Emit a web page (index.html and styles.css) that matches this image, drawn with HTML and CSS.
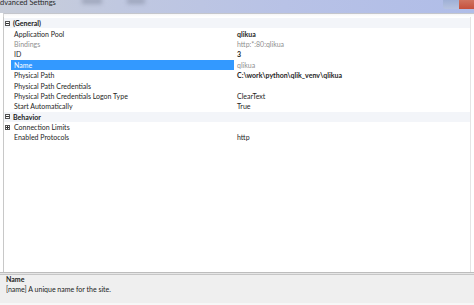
FILE: index.html
```html
<!DOCTYPE html>
<html lang="en">
<head>
    <meta charset="UTF-8">
    <title>Advanced Settings</title>
    <link rel="stylesheet" href="styles.css">
</head>
<body>
    <div class="window">
        <!-- 标题栏 -->
        <div class="titlebar">
            <span class="title">Advanced Settings</span>
            <span class="blur b1"></span>
            <span class="blur b2"></span>
            <span class="spacer"></span>
            <span class="btn_max"></span>
            <span class="btn_close"></span>
        </div>
        <div class="top_line"></div>
        <!-- 属性表 -->
        <div class="grid">
            <div class="row category"><span class="toggle minus"></span><span class="cat">(General)</span></div>
            <div class="row"><span class="name">Application Pool</span><span class="value bold">qlikua</span></div>
            <div class="row readonly"><span class="name">Bindings</span><span class="value">http:*:80:qlikua</span></div>
            <div class="row"><span class="name">ID</span><span class="value bold">3</span></div>
            <div class="row selected"><span class="name">Name</span><span class="value">qlikua</span></div>
            <div class="row"><span class="name">Physical Path</span><span class="value bold">C:\work\python\qlik_venv\qlikua</span></div>
            <div class="row"><span class="name">Physical Path Credentials</span><span class="value"></span></div>
            <div class="row"><span class="name">Physical Path Credentials Logon Type</span><span class="value">ClearText</span></div>
            <div class="row"><span class="name">Start Automatically</span><span class="value">True</span></div>
            <div class="row category"><span class="toggle minus"></span><span class="cat">Behavior</span></div>
            <div class="row"><span class="toggle plus"></span><span class="name sub">Connection Limits</span><span class="value"></span></div>
            <div class="row"><span class="name">Enabled Protocols</span><span class="value">http</span></div>
        </div>
        <!-- 说明区 -->
        <div class="desc">
            <div class="desc_title">Name</div>
            <div class="desc_text">[name] A unique name for the site.</div>
        </div>
    </div>
</body>
</html>
```

FILE: styles.css
```css
*{
    box-sizing: border-box;
}
body{
    margin: 0;
    width: 474px;
    height: 305px;
    overflow: hidden;
    background: #fff;
    font-family: Lato, "Open Sans", "Liberation Sans", sans-serif;
    font-size: 7px;
    color: #1e1e1e;
}
.window{
    display: flex;
    flex-direction: column;
    height: 305px;
}
.titlebar{
    display: flex;
    align-items: flex-start;
    height: 13px;
    background: linear-gradient(to right, #c9ced9 0%, #c0c8e0 25%, #b8c2e6 60%, #b0bde8 100%);
    overflow: hidden;
}
.title{
    margin-left: -5px;
    margin-top: -2px;
    line-height: 9px;
    font-size: 7.5px;
    color: #2b2b2b;
    white-space: nowrap;
}
.blur{
    margin-top: -2px;
    height: 6px;
    background: #7e869b;
    filter: blur(2px);
    opacity: 0.5;
}
.b1{
    width: 20px;
    margin-left: 26px;
}
.b2{
    width: 18px;
    margin-left: 25px;
}
.spacer{
    flex: 1;
}
.btn_max{
    width: 16px;
    height: 9px;
    background: linear-gradient(#9fb0d6, #b7c3e0);
    border-radius: 0 0 0 3px;
}
.btn_close{
    width: 15px;
    height: 9px;
    background: linear-gradient(#d0735f, #c5503c);
}
.top_line{
    height: 4px;
    border-top: 1px solid #c4c6cc;
    background: linear-gradient(#f6f6f7, #ffffff);
    border-left: 1px solid #d5d5d5;
    margin-left: 3px;
}
.grid{
    flex: 1;
    padding-top: 1px;
    margin-left: 3px;
    margin-right: 3px;
    border-left: 1px solid #c8c8c8;
    border-right: 1px solid #e4e4e4;
}
.row{
    display: flex;
    align-items: center;
    height: 10.4px;
    line-height: 10px;
    white-space: nowrap;
}
.row .name{
    width: 223px;
    margin-left: 7px;
    padding-left: 3px;
    height: 10px;
}
.row .value{
    padding-left: 3px;
}
.category{
    background: #f3f5f9;
}
.cat{
    padding-left: 3px;
    font-weight: bold;
    color: #1a1a1a;
}
.bold{
    font-weight: bold;
}
.readonly .name,
.readonly .value{
    color: #8f8f8f;
}
.selected .name{
    background: #3399ff;
    color: #fff;
}
.selected .value{
    color: #8f8f8f;
}
.toggle{
    position: relative;
    width: 5px;
    height: 5px;
    margin-left: 1px;
    border: 1px solid #555;
    background: #fff;
    flex: none;
}
.toggle::before{
    content: "";
    position: absolute;
    left: 0;
    top: 1px;
    width: 3px;
    height: 1px;
    background: #333;
}
.plus::after{
    content: "";
    position: absolute;
    left: 1px;
    top: 0;
    width: 1px;
    height: 3px;
    background: #333;
}
.row .sub{
    margin-left: 1px;
    padding-left: 3px;
    width: 223px;
}
.desc{
    height: 33px;
    border-top: 1px solid #bdbdbd;
    box-shadow: inset 0 1px 0 #e6e6e6, inset 0 2px 0 #c6c6c6;
    background: #efefef;
    padding: 1px 0 0 6px;
    border-bottom: 2px solid #f7f7f7;
    color: #222;
}
.desc_title{
    font-weight: bold;
    line-height: 10px;
}
.desc_text{
    line-height: 10px;
}
```
